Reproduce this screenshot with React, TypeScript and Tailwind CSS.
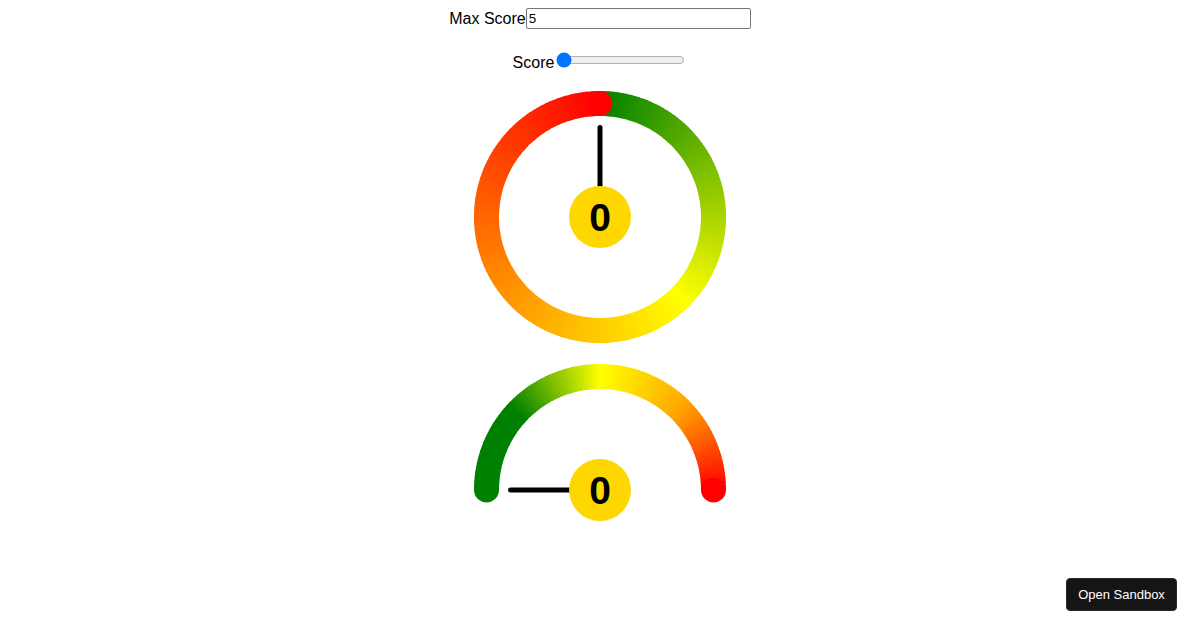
import { useState } from 'react';

type Stop = [number, [number, number, number]];

const GREEN: [number, number, number] = [0, 128, 0];
const YELLOW: [number, number, number] = [255, 255, 0];
const ORANGE: [number, number, number] = [255, 165, 0];
const RED: [number, number, number] = [255, 0, 0];

const FULL_STOPS: Stop[] = [
  [0, GREEN],
  [0.375, YELLOW],
  [1, RED],
];

const HALF_STOPS: Stop[] = [
  [0, GREEN],
  [0.24, GREEN],
  [0.5, YELLOW],
  [0.75, ORANGE],
  [1, RED],
];

function colorAt(stops: Stop[], t: number) {
  for (let i = 0; i < stops.length - 1; i++) {
    const [t1, c1] = stops[i];
    const [t2, c2] = stops[i + 1];
    if (t >= t1 && t <= t2) {
      const f = t2 === t1 ? 0 : (t - t1) / (t2 - t1);
      const c = c1.map((v, k) => Math.round(v + (c2[k] - v) * f));
      return `rgb(${c[0]},${c[1]},${c[2]})`;
    }
  }
  const last = stops[stops.length - 1][1];
  return `rgb(${last[0]},${last[1]},${last[2]})`;
}

// angle in degrees, clockwise from 12 o'clock
function point(cx: number, cy: number, r: number, deg: number) {
  const a = (deg * Math.PI) / 180;
  return [cx + r * Math.sin(a), cy - r * Math.cos(a)];
}

function arc(cx: number, cy: number, r: number, from: number, to: number) {
  const [x1, y1] = point(cx, cy, r, from);
  const [x2, y2] = point(cx, cy, r, to);
  return `M ${x1} ${y1} A ${r} ${r} 0 0 1 ${x2} ${y2}`;
}

const CX = 130;
const CY = 130;
const R = 113.5;
const SW = 25;

function GradientArc({ start, sweep, stops }: { start: number; sweep: number; stops: Stop[] }) {
  const n = Math.round(sweep / 2);
  const step = sweep / n;
  const segs = [];
  for (let i = 0; i < n; i++) {
    const a1 = start + i * step;
    const a2 = Math.min(start + (i + 1) * step + 0.6, start + sweep);
    segs.push(
      <path
        key={i}
        d={arc(CX, CY, R, a1, a2)}
        stroke={colorAt(stops, (i + 0.5) / n)}
        strokeWidth={SW}
        fill="none"
      />
    );
  }
  return <g>{segs}</g>;
}

function Hub({ value }: { value: number }) {
  return (
    <g>
      <circle cx={CX} cy={CY} r={31} fill="#ffd700" />
      <text
        x={CX}
        y={CY + 14}
        textAnchor="middle"
        fontFamily="'Liberation Sans', Arial, sans-serif"
        fontWeight="bold"
        fontSize={39}
        fill="#000"
      >
        {value}
      </text>
    </g>
  );
}

function FullGauge({ score, max }: { score: number; max: number }) {
  const angle = max > 0 ? (score / max) * 360 : 0;
  const [nx, ny] = point(CX, CY, 89.5, angle);
  const [ex, ey] = point(CX, CY, R, 360);
  return (
    <svg width={260} height={260} className="block mx-auto mt-[19px]">
      <GradientArc start={0} sweep={360} stops={FULL_STOPS} />
      <circle cx={ex} cy={ey} r={SW / 2} fill={colorAt(FULL_STOPS, 1)} />
      <line x1={CX} y1={CY} x2={nx} y2={ny} stroke="#000" strokeWidth={5} strokeLinecap="round" />
      <Hub value={score} />
    </svg>
  );
}

function HalfGauge({ score, max }: { score: number; max: number }) {
  const angle = -90 + (max > 0 ? (score / max) * 180 : 0);
  const [nx, ny] = point(CX, CY, 89.5, angle);
  const [sx, sy] = point(CX, CY, R, -90);
  const [ex, ey] = point(CX, CY, R, 90);
  return (
    <svg width={260} height={170} className="block mx-auto mt-[13px]">
      <GradientArc start={-90} sweep={180} stops={HALF_STOPS} />
      <circle cx={sx} cy={sy} r={SW / 2} fill={colorAt(HALF_STOPS, 0)} />
      <circle cx={ex} cy={ey} r={SW / 2} fill={colorAt(HALF_STOPS, 1)} />
      <line x1={CX} y1={CY} x2={nx} y2={ny} stroke="#000" strokeWidth={5} strokeLinecap="round" />
      <Hub value={score} />
    </svg>
  );
}

export default function App() {
  const [maxScore, setMaxScore] = useState('5');
  const [score, setScore] = useState(0);
  const max = Number(maxScore) || 0;

  return (
    <div className="min-h-screen bg-white text-black font-['Liberation_Sans',Arial,sans-serif] text-[16px]">
      <div className="flex justify-center items-center h-[21px] mt-[8px]">
        <span>Max Score</span>
        <input
          type="text"
          value={maxScore}
          onChange={(e) => setMaxScore(e.target.value)}
          className="w-[225px] h-[21px] border border-[#767676] rounded-[2px] px-[2px] text-[13.33px] bg-white outline-none"
        />
      </div>

      <div className="flex justify-center items-center h-[16px] mt-[23px]">
        <span className="pt-[5px]">Score</span>
        <input
          type="range"
          min={0}
          max={max}
          value={score}
          onChange={(e) => setScore(Number(e.target.value))}
          className="w-[129px] h-[16px] mx-[2px]"
        />
      </div>

      <FullGauge score={score} max={max} />
      <HalfGauge score={score} max={max} />

      <button className="fixed bottom-[19px] right-[23px] w-[111px] h-[33px] rounded-[4px] bg-[#151515] border border-[#2a2a2a] text-white text-[13px] font-['Liberation_Sans',Arial,sans-serif]">
        Open Sandbox
      </button>
    </div>
  );
}
